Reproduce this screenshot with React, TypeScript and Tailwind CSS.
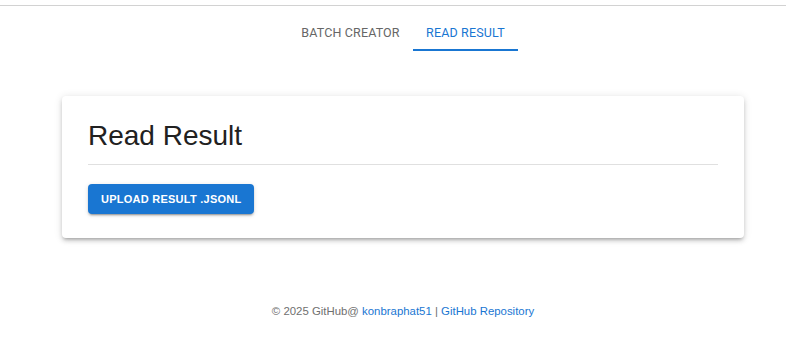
import { useState } from "react";

const tabs = [
  { id: "batch", label: "BATCH CREATOR", width: "w-[125px]" },
  { id: "read", label: "READ RESULT", width: "w-[105px]" },
];

export default function App() {
  const [active, setActive] = useState("read");

  return (
    <div className="min-h-screen bg-white" style={{ fontFamily: '"Liberation Sans", Arial, sans-serif' }}>
      {/* top rule */}
      <div className="mt-[5px] h-px bg-[#d2d2d2]" />

      <div className="pl-[62px] pr-[42px]">
        {/* Tabs */}
        <div className="flex justify-center">
          {tabs.map((t) => (
            <button
              key={t.id}
              onClick={() => setActive(t.id)}
              className={`${t.width} h-[45px] flex flex-col items-center justify-between`}
            >
              <span
                className={`pt-[19px] text-[12.5px] leading-[16px] font-normal tracking-[0.15px] ${
                  active === t.id ? "text-[#1976d2]" : "text-[#666666]"
                }`}
                style={{ fontFamily: "Roboto, sans-serif" }}
              >
                {t.label}
              </span>
              <span className={`h-[2px] w-full ${active === t.id ? "bg-[#1976d2]" : "bg-transparent"}`} />
            </button>
          ))}
        </div>

        {/* Card */}
        <div className="mt-[45px] rounded-[4px] bg-white px-[26px] pt-[24px] pb-[24px] shadow-[0_3px_3px_-2px_rgba(0,0,0,0.2),0_3px_4px_0_rgba(0,0,0,0.14),0_1px_8px_0_rgba(0,0,0,0.12)]">
          <h1 className="text-[28px] leading-[32px] text-[#212121]">Read Result</h1>
          <div className="mt-[12px] h-px bg-[#e0e0e0]" />
          <button className="mt-[19px] h-[30px] rounded-[4px] bg-[#1976d2] px-[13px] text-[11px] font-bold tracking-[0.25px] text-white shadow-[0_3px_1px_-2px_rgba(0,0,0,0.2),0_2px_2px_0_rgba(0,0,0,0.14),0_1px_5px_0_rgba(0,0,0,0.12)]">
            UPLOAD RESULT .JSONL
          </button>
        </div>

        {/* Footer */}
        <footer className="mt-[65px] text-center text-[11.4px] leading-[16px] text-[#707070]">
          © 2025 GitHub@{" "}
          <a href="#" className="text-[#1976d2]">
            konbraphat51
          </a>{" "}
          |{" "}
          <a href="#" className="text-[#1976d2]">
            GitHub Repository
          </a>
        </footer>
      </div>
    </div>
  );
}
